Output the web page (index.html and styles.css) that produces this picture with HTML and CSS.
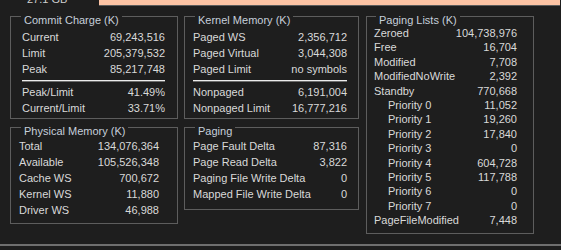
FILE: index.html
```html
<!DOCTYPE html>
<html lang="en">
<head>
    <meta charset="UTF-8">
    <meta name="viewport" content="width=device-width, initial-scale=1.0">
    <title>System Information - Memory</title>
    <link rel="stylesheet" href="styles.css">
</head>
<body>
    <div class="top">
        <span class="top-label">27.1 GB</span>
        <div class="top-graph"></div>
    </div>

    <div class="panels">
        <div class="col col-left">
            <fieldset class="group commit">
                <legend>Commit Charge (K)</legend>
                <div class="row"><span>Current</span><span>69,243,516</span></div>
                <div class="row"><span>Limit</span><span>205,379,532</span></div>
                <div class="row"><span>Peak</span><span>85,217,748</span></div>
                <div class="sep"></div>
                <div class="row"><span>Peak/Limit</span><span>41.49%</span></div>
                <div class="row"><span>Current/Limit</span><span>33.71%</span></div>
            </fieldset>

            <fieldset class="group physical">
                <legend>Physical Memory (K)</legend>
                <div class="row"><span>Total</span><span>134,076,364</span></div>
                <div class="row"><span>Available</span><span>105,526,348</span></div>
                <div class="row"><span>Cache WS</span><span>700,672</span></div>
                <div class="row"><span>Kernel WS</span><span>11,880</span></div>
                <div class="row"><span>Driver WS</span><span>46,988</span></div>
            </fieldset>
        </div>

        <div class="col col-mid">
            <fieldset class="group kernel">
                <legend>Kernel Memory (K)</legend>
                <div class="row"><span>Paged WS</span><span>2,356,712</span></div>
                <div class="row"><span>Paged Virtual</span><span>3,044,308</span></div>
                <div class="row"><span>Paged Limit</span><span>no symbols</span></div>
                <div class="sep"></div>
                <div class="row"><span>Nonpaged</span><span>6,191,004</span></div>
                <div class="row"><span>Nonpaged Limit</span><span>16,777,216</span></div>
            </fieldset>

            <fieldset class="group paging">
                <legend>Paging</legend>
                <div class="row"><span>Page Fault Delta</span><span>87,316</span></div>
                <div class="row"><span>Page Read Delta</span><span>3,822</span></div>
                <div class="row"><span>Paging File Write Delta</span><span>0</span></div>
                <div class="row"><span>Mapped File Write Delta</span><span>0</span></div>
            </fieldset>
        </div>

        <div class="col col-right">
            <fieldset class="group lists">
                <legend>Paging Lists (K)</legend>
                <div class="row"><span>Zeroed</span><span>104,738,976</span></div>
                <div class="row"><span>Free</span><span>16,704</span></div>
                <div class="row"><span>Modified</span><span>7,708</span></div>
                <div class="row"><span>ModifiedNoWrite</span><span>2,392</span></div>
                <div class="row"><span>Standby</span><span>770,668</span></div>
                <div class="row sub"><span>Priority 0</span><span>11,052</span></div>
                <div class="row sub"><span>Priority 1</span><span>19,260</span></div>
                <div class="row sub"><span>Priority 2</span><span>17,840</span></div>
                <div class="row sub"><span>Priority 3</span><span>0</span></div>
                <div class="row sub"><span>Priority 4</span><span>604,728</span></div>
                <div class="row sub"><span>Priority 5</span><span>117,788</span></div>
                <div class="row sub"><span>Priority 6</span><span>0</span></div>
                <div class="row sub"><span>Priority 7</span><span>0</span></div>
                <div class="row"><span>PageFileModified</span><span>7,448</span></div>
            </fieldset>
        </div>
    </div>

    <div class="status-line"></div>
</body>
</html>
```

FILE: styles.css
```css
body {
    margin: 0;
    height: 250px;
    overflow: hidden;
    background-color: #1e1e1e;
    color: #d9d9d9;
    font-family: "Liberation Sans", Arial, sans-serif;
    font-size: 11px;
}

/* strip of the graph above, mostly scrolled out of view */
.top {
    display: flex;
    height: 8px;
    overflow: hidden;
}

.top-label {
    margin: -7px 0 0 27px;
    width: 72px;
    line-height: 12px;
    color: #d0d0d0;
}

.top-graph {
    width: 461px;
    height: 5px;
    background-color: #fcc3a4;
    border-bottom: 1px solid #5c5c5c;
}

.panels {
    display: flex;
    gap: 6px;
    padding-left: 10px;
}

.col {
    display: flex;
    flex-direction: column;
}

.col-left { width: 168px; }
.col-mid { width: 175px; }
.col-right { width: 168px; margin-left: 1px; }

.group {
    margin: 0;
    padding: 0;
    min-width: 0;
    border: 1px solid #5d5d5d;
}

.group legend {
    margin-left: 2px;
    padding: 8px 3px 0;
    line-height: 8px;
    color: #c6cfdb;
}

.row {
    display: flex;
    justify-content: space-between;
    line-height: 16px;
    white-space: nowrap;
}

.sep {
    height: 1px;
    margin: 3px 0 2px;
    background-color: #ececec;
    border-bottom: 1px solid #6c6c6c;
}

.commit { padding: 5px 12px 2px 11px; }
.commit legend { margin-left: -1px; }
.kernel { padding: 5px 11px 2px 8px; }
.physical { padding: 3px 18px 5px 8px; }
.paging { padding: 3px 11px 7px 8px; }

.lists { padding: 2px 16px 5px 7px; }
.lists legend { margin-left: 2px; }
.lists .row { line-height: 14.4px; }
.lists .sub { padding-left: 14px; }

.status-line {
    height: 2px;
    margin-top: 10px;
    background-color: #6f6f6f;
}
```
